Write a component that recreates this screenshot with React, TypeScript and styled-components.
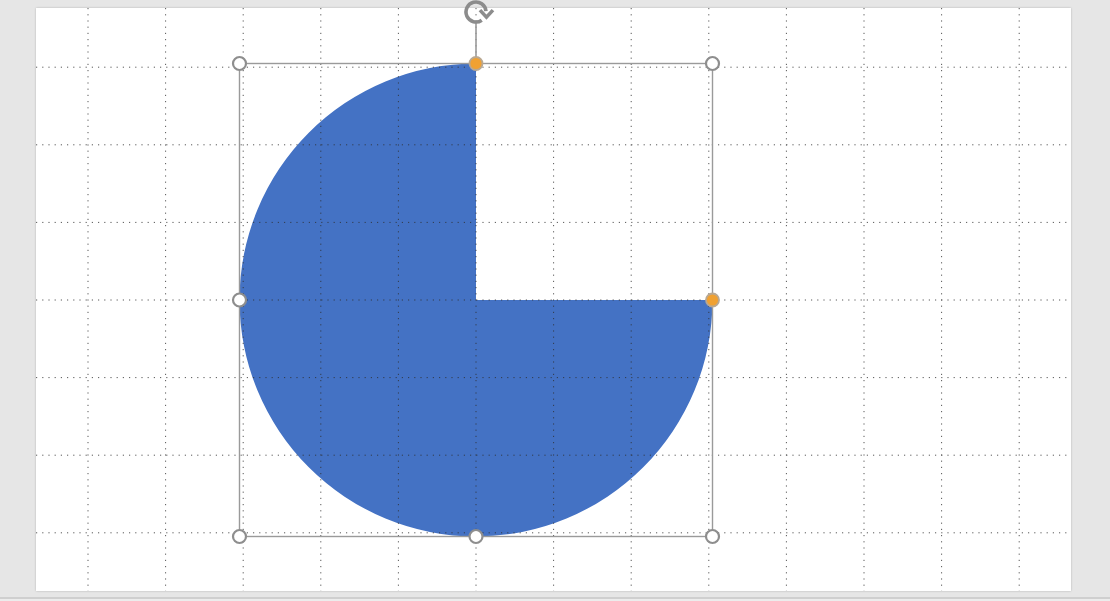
import styled, { createGlobalStyle } from 'styled-components'

const GlobalStyle = createGlobalStyle`
  html, body {
    margin: 0;
    padding: 0;
    background: #e6e6e6;
    font-family: "Liberation Sans", Arial, sans-serif;
    overflow: hidden;
  }
`

// slide geometry (slide-local coordinates)
const SLIDE_W = 1035
const SLIDE_H = 583
const CX = 440
const CY = 292
const R = 236.5
const STEP = 77.6

const gridXs: number[] = []
for (let x = CX - STEP * 5; x < SLIDE_W; x += STEP) gridXs.push(x)
const gridYs: number[] = []
for (let y = CY - STEP * 3; y < SLIDE_H; y += STEP) gridYs.push(y)

const Handle = ({ x, y, accent }: { x: number, y: number, accent?: boolean }) => (
  <circle
    cx={x}
    cy={y}
    r={6.5}
    fill={accent ? '#f0a132' : '#ffffff'}
    stroke={accent ? '#b9a892' : '#8e8e8e'}
    strokeWidth={accent ? 1.8 : 2.2}
  />
)

const RotateHandle = ({ x, y }: { x: number, y: number }) => {
  const r = 10
  const a0 = (-5 * Math.PI) / 180
  const a1 = (55 * Math.PI) / 180
  const sx = x + r * Math.cos(a0)
  const sy = y + r * Math.sin(a0)
  const ex = x + r * Math.cos(a1)
  const ey = y + r * Math.sin(a1)
  return (
    <g fill="none" stroke="#8c8c8c" strokeWidth={3.6} strokeLinejoin="miter">
      <path d={`M ${sx} ${sy} A ${r} ${r} 0 1 0 ${ex} ${ey}`} />
      <path d={`M ${sx - 6} ${sy - 1} L ${sx + 0.5} ${sy + 6} L ${sx + 7} ${sy - 1}`} />
    </g>
  )
}

const App = () => {
  const left = CX - R
  const right = CX + R
  const top = CY - R
  const bottom = CY + R

  return (
    <>
      <GlobalStyle />
      <Workspace>
        <CanvasArea>
          <Slide>
            <Canvas width={SLIDE_W} height={SLIDE_H} viewBox={`0 0 ${SLIDE_W} ${SLIDE_H}`}>
              <path
                d={`M ${CX} ${CY} L ${CX} ${top} A ${R} ${R} 0 1 0 ${right} ${CY} Z`}
                fill="#4472c4"
              />
              <g stroke="#2e2e2e" strokeWidth={1} strokeDasharray="1.2 5" opacity={0.8}>
                {gridXs.map(x => (
                  <line key={'v' + x} x1={x} y1={0} x2={x} y2={SLIDE_H} />
                ))}
                {gridYs.map(y => (
                  <line key={'h' + y} x1={0} y1={y} x2={SLIDE_W} y2={y} />
                ))}
              </g>
              <g>
                <rect
                  x={left}
                  y={top}
                  width={R * 2}
                  height={R * 2}
                  fill="none"
                  stroke="#9a9a9a"
                  strokeWidth={1.4}
                />
                <line x1={CX} y1={top} x2={CX} y2={15} stroke="#9a9a9a" strokeWidth={1.6} />
                <RotateHandle x={CX} y={4} />
                <Handle x={left} y={top} />
                <Handle x={right} y={top} />
                <Handle x={left} y={CY} />
                <Handle x={left} y={bottom} />
                <Handle x={CX} y={bottom} />
                <Handle x={right} y={bottom} />
                <Handle x={CX} y={top} accent />
                <Handle x={right} y={CY} accent />
              </g>
            </Canvas>
          </Slide>
        </CanvasArea>
        <BottomEdge />
      </Workspace>
    </>
  )
}

const Workspace = styled.div`
  width: 1110px;
  height: 601px;
  display: flex;
  flex-direction: column;
  background: #e6e6e6;
`

const CanvasArea = styled.div`
  display: flex;
  padding: 8px 0 6px 36px;
`

const Slide = styled.div`
  position: relative;
  width: ${SLIDE_W}px;
  height: ${SLIDE_H}px;
  background: #ffffff;
  box-shadow: 0 0 2px rgba(0, 0, 0, 0.22);
`

const Canvas = styled.svg`
  display: block;
  overflow: visible;
`

const BottomEdge = styled.div`
  flex: 1;
  border-top: 2px solid #cfcfcf;
  background: #ececec;
`

export default App
